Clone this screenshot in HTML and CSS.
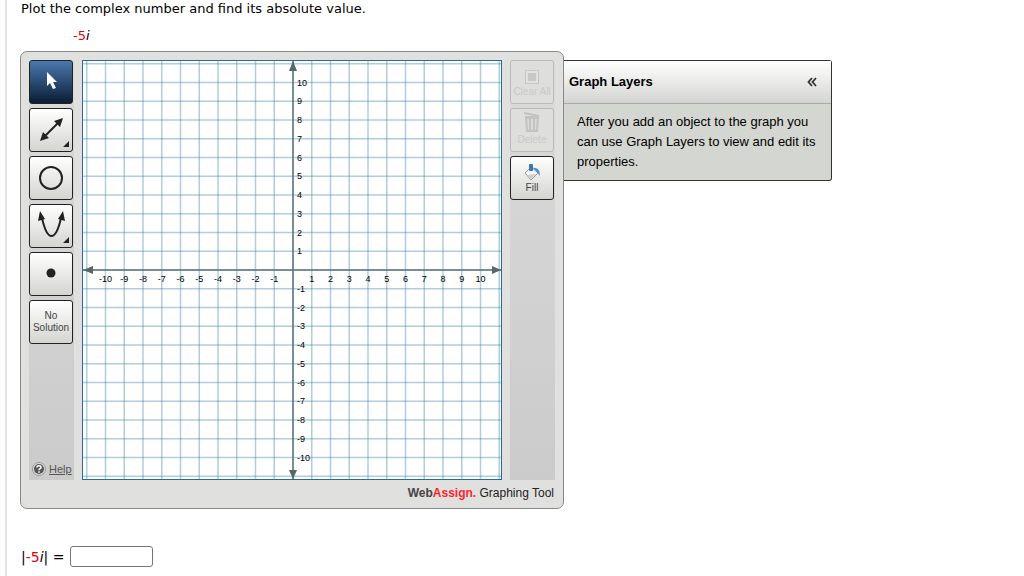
FILE: index.html
```html
<!DOCTYPE html>
<html lang="en">
<head>
    <meta charset="UTF-8">
    <meta name="viewport" content="width=device-width, initial-scale=1.0">
    <title>Graphing Tool</title>
    <link rel="stylesheet" href="styles.css">
</head>
<body>
    <main class="question">
        <p class="prompt">Plot the complex number and find its absolute value.</p>
        <p class="number"><span class="random">-5</span><i>i</i></p>

        <div class="graph-row">
            <section class="graph-tool">
                <div class="workspace">
                    <div class="toolbar">
                        <button class="tool active" type="button" aria-label="Select">
                            <svg width="44" height="44" viewBox="0 0 44 44">
                                <path d="M18 12v14l3-3 3 6 3-1-3-6h4z" fill="#fff"/>
                            </svg>
                        </button>
                        <button class="tool" type="button" aria-label="Line">
                            <svg width="44" height="44" viewBox="0 0 44 44">
                                <path d="M15 29L29 15" stroke="#222" stroke-width="2"/>
                                <path d="M34 10l-3 9-6-6zM11 33l3-9 6 6zM40 33v6h-6z" fill="#222"/>
                            </svg>
                        </button>
                        <button class="tool" type="button" aria-label="Circle">
                            <svg width="44" height="44" viewBox="0 0 44 44">
                                <circle cx="22" cy="22" r="11" fill="none" stroke="#222" stroke-width="2"/>
                            </svg>
                        </button>
                        <button class="tool" type="button" aria-label="Parabola">
                            <svg width="44" height="44" viewBox="0 0 44 44">
                                <path d="M13 14C15 23 18 32 22.500 32S30 23 32 14" fill="none" stroke="#222" stroke-width="2"/>
                                <path d="M11 7l5 8-7 2zM34 7l2 10-7-2zM40 33v6h-6z" fill="#222"/>
                            </svg>
                        </button>
                        <button class="tool" type="button" aria-label="Point">
                            <svg width="44" height="44" viewBox="0 0 44 44">
                                <circle cx="22" cy="21" r="4.500" fill="#222"/>
                            </svg>
                        </button>
                        <button class="tool" type="button">No<br>Solution</button>
                        <a class="help" href="#help">
                            <svg width="14" height="14" viewBox="0 0 14 14">
                                <circle cx="7" cy="7" r="6.500" fill="#ddd" stroke="#999"/>
                                <circle cx="7" cy="7" r="5" fill="#555"/>
                                <path d="M5 5.500C5 3.300 9 3.300 9 5.500C9 6.800 7 6.700 7 8.300M7 9.300v1.500" fill="none" stroke="#fff" stroke-width="1.500"/>
                            </svg>
                            <span>Help</span>
                        </a>
                    </div>

                    <svg id="graph" class="graph" viewBox="0 0 418 418"></svg>

                    <div class="toolbar">
                        <button class="tool labeled" type="button" disabled>
                            <svg width="16" height="16" viewBox="0 0 16 16">
                                <rect x="1.500" y="1.500" width="13" height="13" fill="#eee" stroke="#888"/>
                                <rect x="4" y="4" width="8" height="8" fill="#888"/>
                            </svg>
                            Clear All
                        </button>
                        <button class="tool labeled" type="button" disabled>
                            <svg width="18" height="22" viewBox="0 0 18 22">
                                <path d="M1 2l15 3M2 6h14" fill="none" stroke="#777" stroke-width="2"/>
                                <path d="M3 7h12l-1 13H4z" fill="#ccc" stroke="#777" stroke-width="2"/>
                                <path d="M7 8v11M11 8v11" stroke="#777" stroke-width="2"/>
                            </svg>
                            Delete
                        </button>
                        <button class="tool labeled" type="button">
                            <svg width="18" height="18" viewBox="0 0 18 18">
                                <path d="M2 10l6-6 7 6-7 7z" fill="#f4f4f4" stroke="#999"/>
                                <path d="M5 12l3 4 5-5z" fill="#ccc"/>
                                <path d="M10 5c5-1 7 3 7 8l-3-4z" fill="#4a8fca"/>
                                <rect x="6" y="1" width="4" height="7" rx="1" fill="#3b74b9"/>
                            </svg>
                            Fill
                        </button>
                    </div>
                </div>
                <footer class="brand"><b>Web<span>Assign.</span></b> Graphing Tool</footer>
            </section>

            <aside class="layers">
                <header>
                    <h2>Graph Layers</h2>
                    <button class="collapse" type="button" aria-label="Collapse">
                        <svg width="10" height="10" viewBox="0 0 10 10">
                            <path d="M5 1L1.500 5L5 9M9 1L5.500 5L9 9" fill="none" stroke="#333" stroke-width="1.800"/>
                        </svg>
                    </button>
                </header>
                <p>After you add an object to the graph you can use Graph Layers to view and edit its properties.</p>
            </aside>
        </div>

        <div class="answer">
            <label for="answer">|<span class="random">-5</span><i>i</i>| =</label>
            <input type="text" id="answer">
        </div>
    </main>

    <script>
        const size = 418;
        const originX = 210;
        const originY = 209;
        const step = 18.75;
        const parts = [];

        function line(x1, y1, x2, y2, cls) {
            parts.push(`<line x1="${x1}" y1="${y1}" x2="${x2}" y2="${y2}" class="${cls}"/>`);
        }

        for (let i = -11; i <= 11; i++) {
            const x = originX + i * step;
            const y = originY + i * step;
            line(x, 0, x, size, "grid");
            line(0, y, size, y, "grid");
        }

        line(originX, 0, originX, size, "axis");
        line(0, originY, size, originY, "axis");
        parts.push(`<path class="arrow" d="M210 0l4 10h-8zM210 418l4-9h-8zM0 209l10-4v8zM418 209l-9-4v8z"/>`);

        for (let i = -10; i <= 10; i++) {
            if (i === 0) continue;
            const x = originX + i * step;
            const y = originY - i * step;
            parts.push(`<text x="${x}" y="221" text-anchor="middle">${i}</text>`);
            parts.push(`<text x="214" y="${y + 3}">${i}</text>`);
        }

        document.getElementById("graph").innerHTML = parts.join("");
    </script>
</body>
</html>
```
FILE: styles.css
```css
* {
    margin: 0;
    padding: 0;
    box-sizing: border-box;
}
body {
    font-family: Verdana, "DejaVu Sans", sans-serif;
    font-size: 13px;
    line-height: 16px;
    background-color: #fff;
    color: #000;
}
.question {
    min-height: 100vh;
    margin-left: 5px;
    padding: 1px 0 0 13px;
    border-left: 2px solid #e4e4e4;
}
.prompt {
    padding-left: 1px;
}
.number {
    padding: 11px 0 7px 53px;
}
.random {
    color: #e8000b;
}
.graph-row {
    display: flex;
    align-items: flex-start;
    font-family: "Liberation Sans", Arial, sans-serif;
}
.graph-tool {
    padding: 8px 8px 7px;
    border: 1px solid #888;
    border-radius: 7px;
    background-color: #e0e0de;
}
.workspace {
    display: flex;
    gap: 8px;
}
.toolbar {
    display: flex;
    flex-direction: column;
    align-items: flex-start;
    gap: 4px;
    width: 45px;
    background: linear-gradient(#dadada, #cbcbcb);
}
.tool {
    display: flex;
    justify-content: center;
    align-items: center;
    width: 44px;
    height: 44px;
    border: 1px solid #222;
    border-radius: 3px;
    background: linear-gradient(#fff, #d4d5d1);
    color: #444;
    font-family: inherit;
    font-size: 10px;
    line-height: 12px;
    cursor: pointer;
}
.tool svg {
    flex-shrink: 0;
}
.tool.active {
    background: linear-gradient(#4a78ad, #0a1d35);
}
.tool.labeled {
    flex-direction: column;
    justify-content: flex-end;
    gap: 1px;
    padding-bottom: 5px;
    white-space: nowrap;
}
.tool:disabled {
    border-color: #bbb;
    background: #dededd;
    color: #cacaca;
    cursor: default;
}
.tool:disabled svg {
    opacity: 0.25;
}
.help {
    display: flex;
    align-items: center;
    gap: 3px;
    margin: auto 0 4px 3px;
    color: #555;
    font-size: 11px;
    line-height: 14px;
}
.graph {
    width: 420px;
    height: 420px;
    border: 1px solid #2869a5;
    background-color: #fff;
}
.grid {
    stroke: #3a84a8;
    stroke-opacity: 0.4;
    stroke-width: 1.5;
}
.axis {
    stroke: #5c757c;
    stroke-width: 1.5;
}
.arrow {
    fill: #56676c;
}
.graph text {
    fill: #000;
    font-size: 9px;
}
.brand {
    padding: 5px 1px 0 0;
    color: #222;
    font-size: 12px;
    text-align: right;
}
.brand b {
    color: #444;
}
.brand span {
    color: #fb2530;
}
.layers {
    width: 268px;
    margin-top: 9px;
    border: 1px solid #333;
    border-left: 0;
    border-radius: 0 3px 3px 0;
    background-color: #d4d6d1;
}
.layers header {
    display: flex;
    justify-content: space-between;
    align-items: center;
    height: 43px;
    padding: 0 14px 0 5px;
    border-bottom: 1px solid #aaa;
    background: linear-gradient(#fff, #d4d5d2);
}
.layers h2 {
    font-size: 13px;
}
.collapse {
    display: flex;
    border: 0;
    background: none;
    cursor: pointer;
}
.layers p {
    padding: 8px 12px 8px 13px;
    line-height: 20px;
}
.answer {
    display: flex;
    align-items: center;
    gap: 6px;
    margin: 37px 0 0 1px;
    font-size: 14px;
}
.answer input {
    width: 83px;
    height: 21px;
    padding: 0 4px;
    border: 1px solid #767676;
    border-radius: 3px;
    font: inherit;
}
```
